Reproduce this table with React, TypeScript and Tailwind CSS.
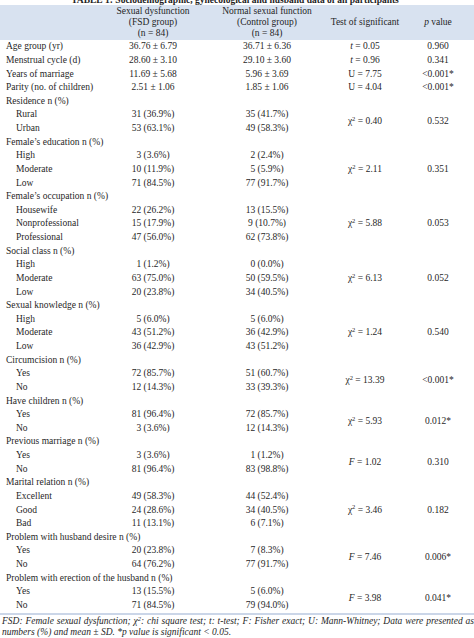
import React from "react";

type Kind = "chi" | "F" | "t" | "U";

const Test = ({ kind, v }: { kind: Kind; v: string }) => {
  if (kind === "chi")
    return (
      <span>
        χ<sup className="text-[6.5px]">2</sup> = {v}
      </span>
    );
  if (kind === "U") return <span>U = {v}</span>;
  return (
    <span>
      <i>{kind}</i> = {v}
    </span>
  );
};

const simple: [string, string, string, Kind, string, string][] = [
  ["Age group (yr)", "36.76 ± 6.79", "36.71 ± 6.36", "t", "0.05", "0.960"],
  ["Menstrual cycle (d)", "28.60 ± 3.10", "29.10 ± 3.60", "t", "0.96", "0.341"],
  ["Years of marriage", "11.69 ± 5.68", "5.96 ± 3.69", "U", "7.75", "<0.001*"],
  ["Parity (no. of children)", "2.51 ± 1.06", "1.85 ± 1.06", "U", "4.04", "<0.001*"],
];

type Group = {
  title: string;
  rows: [string, string, string][];
  kind: Kind;
  v: string;
  p: string;
};

const groups: Group[] = [
  { title: "Residence n (%)", rows: [["Rural", "31 (36.9%)", "35 (41.7%)"], ["Urban", "53 (63.1%)", "49 (58.3%)"]], kind: "chi", v: "0.40", p: "0.532" },
  { title: "Female’s education n (%)", rows: [["High", "3 (3.6%)", "2 (2.4%)"], ["Moderate", "10 (11.9%)", "5 (5.9%)"], ["Low", "71 (84.5%)", "77 (91.7%)"]], kind: "chi", v: "2.11", p: "0.351" },
  { title: "Female’s occupation n (%)", rows: [["Housewife", "22 (26.2%)", "13 (15.5%)"], ["Nonprofessional", "15 (17.9%)", "9 (10.7%)"], ["Professional", "47 (56.0%)", "62 (73.8%)"]], kind: "chi", v: "5.88", p: "0.053" },
  { title: "Social class n (%)", rows: [["High", "1 (1.2%)", "0 (0.0%)"], ["Moderate", "63 (75.0%)", "50 (59.5%)"], ["Low", "20 (23.8%)", "34 (40.5%)"]], kind: "chi", v: "6.13", p: "0.052" },
  { title: "Sexual knowledge n (%)", rows: [["High", "5 (6.0%)", "5 (6.0%)"], ["Moderate", "43 (51.2%)", "36 (42.9%)"], ["Low", "36 (42.9%)", "43 (51.2%)"]], kind: "chi", v: "1.24", p: "0.540" },
  { title: "Circumcision n (%)", rows: [["Yes", "72 (85.7%)", "51 (60.7%)"], ["No", "12 (14.3%)", "33 (39.3%)"]], kind: "chi", v: "13.39", p: "<0.001*" },
  { title: "Have children n (%)", rows: [["Yes", "81 (96.4%)", "72 (85.7%)"], ["No", "3 (3.6%)", "12 (14.3%)"]], kind: "chi", v: "5.93", p: "0.012*" },
  { title: "Previous marriage n (%)", rows: [["Yes", "3 (3.6%)", "1 (1.2%)"], ["No", "81 (96.4%)", "83 (98.8%)"]], kind: "F", v: "1.02", p: "0.310" },
  { title: "Marital relation n (%)", rows: [["Excellent", "49 (58.3%)", "44 (52.4%)"], ["Good", "24 (28.6%)", "34 (40.5%)"], ["Bad", "11 (13.1%)", "6 (7.1%)"]], kind: "chi", v: "3.46", p: "0.182" },
  { title: "Problem with husband desire n (%)", rows: [["Yes", "20 (23.8%)", "7 (8.3%)"], ["No", "64 (76.2%)", "77 (91.7%)"]], kind: "F", v: "7.46", p: "0.006*" },
  { title: "Problem with erection of the husband n (%)", rows: [["Yes", "13 (15.5%)", "5 (6.0%)"], ["No", "71 (84.5%)", "79 (94.0%)"]], kind: "F", v: "3.98", p: "0.041*" },
];

const cell = "flex items-center justify-center whitespace-nowrap";

export default function App() {
  return (
    <div className="w-[474px] h-[638px] overflow-hidden bg-white text-[#1f1f1f] text-[9.5px] font-['Liberation_Serif','Times_New_Roman',serif]">
      <div className="-mt-[5px] h-[10px] leading-[10px] text-center font-bold pr-[4px] whitespace-nowrap">
        TABLE 1: Sociodemographic, gynecological and husband data of all participants
      </div>
      <div className="grid grid-cols-[100px_106px_122px_74px_72px] h-[35px] bg-[#d8e2f0] leading-[11.3px]">
        <div />
        <div className="flex flex-col items-center justify-center">
          <span>Sexual dysfunction</span>
          <span>(FSD group)</span>
          <span>(n = 84)</span>
        </div>
        <div className="flex flex-col items-center justify-center">
          <span>Normal sexual function</span>
          <span>(Control group)</span>
          <span>(n = 84)</span>
        </div>
        <div className={cell}>Test of significant</div>
        <div className={cell}>
          <span>
            <i>p</i> value
          </span>
        </div>
      </div>
      <div className="grid grid-cols-[100px_106px_122px_74px_72px] auto-rows-[13.63px] leading-[11px]">
        {simple.map(([l, a, b, k, v, p]) => (
          <React.Fragment key={l}>
            <div className="flex items-center pl-[6px] whitespace-nowrap">{l}</div>
            <div className={cell}>{a}</div>
            <div className={cell}>{b}</div>
            <div className={cell}>
              <Test kind={k} v={v} />
            </div>
            <div className={cell}>{p}</div>
          </React.Fragment>
        ))}
        {groups.map((g) => {
          const span = g.rows.length === 3 ? "row-span-3" : "row-span-2";
          return (
            <React.Fragment key={g.title}>
              <div className="col-span-5 flex items-center pl-[6px] whitespace-nowrap">{g.title}</div>
              {g.rows.map(([l, a, b], i) => (
                <React.Fragment key={l}>
                  <div className="flex items-center pl-[16px] whitespace-nowrap">{l}</div>
                  <div className={cell}>{a}</div>
                  <div className={cell}>{b}</div>
                  {i === 0 && (
                    <>
                      <div className={`${cell} ${span}`}>
                        <Test kind={g.kind} v={g.v} />
                      </div>
                      <div className={`${cell} ${span}`}>{g.p}</div>
                    </>
                  )}
                </React.Fragment>
              ))}
            </React.Fragment>
          );
        })}
      </div>
      <div className="h-[2px] bg-[#cbd6e8] mt-[1px]" />
      <p className="italic text-justify leading-[11px] pl-[2px] pt-[1px]">
        FSD: Female sexual dysfunction; χ<sup className="text-[6.5px]">2</sup>: chi square test; t: t-test; F: Fisher exact; U: Mann-Whitney; Data were presented as numbers (%) and mean ± SD. *p value is significant &lt; 0.05.
      </p>
    </div>
  );
}
